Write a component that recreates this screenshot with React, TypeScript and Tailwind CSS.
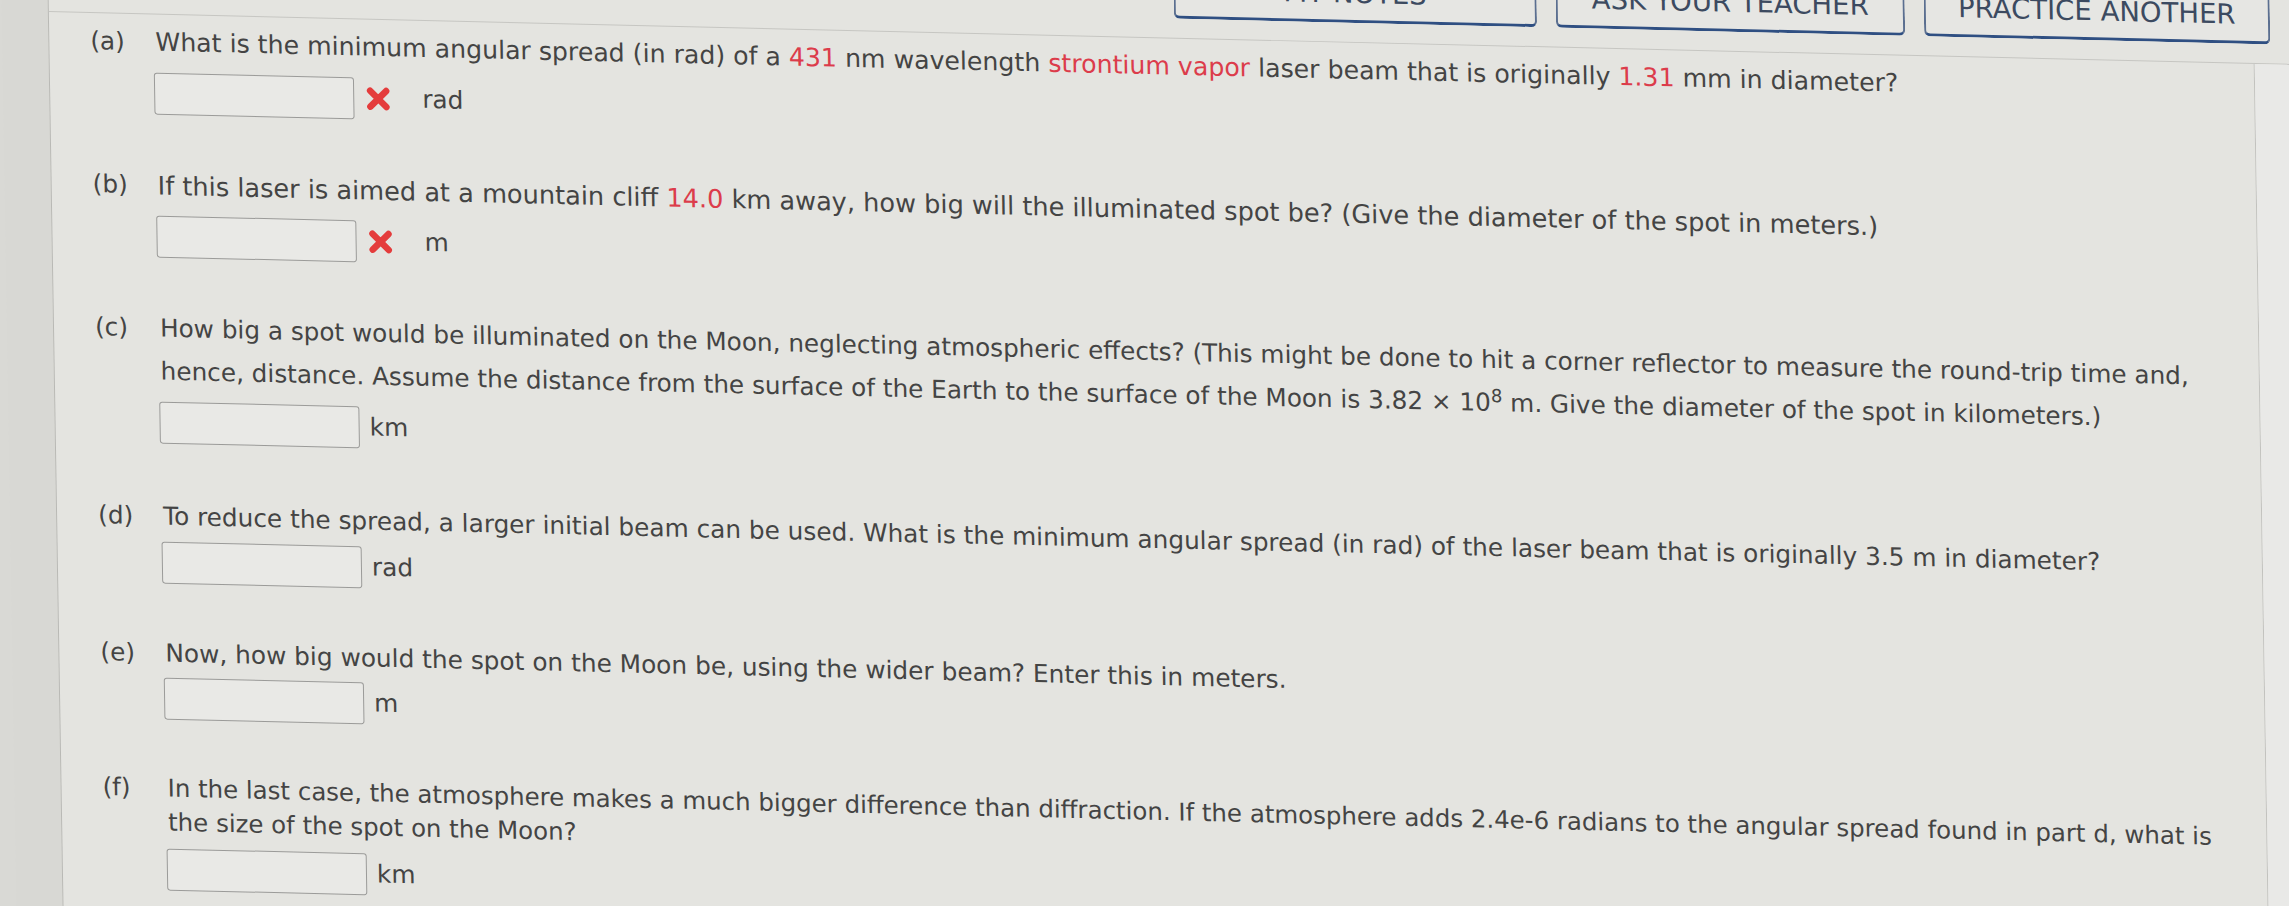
import React from "react";

const R = "text-[#dc3c4b]";

function XMark() {
  return (
    <svg width="26" height="26" viewBox="0 0 26 26" className="ml-[11px] shrink-0">
      <path d="M5 5 L21 21 M21 5 L5 21" stroke="#e43c3c" strokeWidth="6.5" strokeLinecap="round" />
    </svg>
  );
}

function Answer({ unit, wrong, mt }: { unit: string; wrong?: boolean; mt: string }) {
  return (
    <div className={"flex items-center text-[24.8px] " + mt}>
      <div className="-ml-[2px] h-[42px] w-[200px] shrink-0 rounded-[3px] border-[1.5px] border-[#9b9b99] bg-[#e9e9e6]" />
      {wrong ? <XMark /> : null}
      <span className={wrong ? "ml-[31px]" : "ml-[10px]"}>{unit}</span>
    </div>
  );
}

function Part({
  label,
  unit,
  wrong,
  top,
  size,
  ans = "mt-[13px]",
  children,
}: {
  label: string;
  unit: string;
  wrong?: boolean;
  top: string;
  size: string;
  ans?: string;
  children: React.ReactNode;
}) {
  return (
    <div className={"flex " + top}>
      <div className="w-[65px] shrink-0 whitespace-nowrap">{label}</div>
      <div className="flex-1">
        <div className={"whitespace-nowrap " + size}>{children}</div>
        <Answer unit={unit} wrong={wrong} mt={ans} />
      </div>
    </div>
  );
}

function Btn({ text, w }: { text: string; w: string }) {
  return (
    <div
      className={
        "flex h-[52px] shrink-0 items-end justify-center rounded-[6px] border-2 border-b-[3px] border-[#5b6f90] border-b-[#2f4f82] bg-[#e6e6e3] pb-[13px] text-[27.5px] leading-none text-[#3c4a60] " +
        w
      }
    >
      {text}
    </div>
  );
}

export default function App() {
  return (
    <div className="h-[906px] w-[2289px] overflow-hidden bg-[#d9d9d5] font-['DejaVu_Sans',_'Verdana',_sans-serif] text-[24.8px] leading-[34px] text-[#444444]">
      <div className="-mt-[100px] flex h-[1120px] w-[2420px] origin-top-left skew-x-[0.94deg] skew-y-[1.35deg]">
        <div className="w-[46px] shrink-0 bg-[#d8d8d4]" />
        <div className="flex flex-1 flex-col border-l border-[#b9b9b5] bg-[#e4e4e0]">
          <div className="flex h-[111px] shrink-0 items-end border-b border-[#c6c6c2] pb-[19px]">
            <div className="ml-[1125px] flex gap-[19px]">
              <Btn text="MY NOTES" w="w-[363px]" />
              <Btn text="ASK YOUR TEACHER" w="w-[349px]" />
              <Btn text="PRACTICE ANOTHER" w="w-[346px]" />
            </div>
          </div>
          <div className="flex flex-1">
            <div className="flex w-[2205px] shrink-0 flex-col border-r border-[#c2c2be] pl-[41px] pt-[11px]">
              <Part label="(a)" unit="rad" wrong top="mt-0" size="text-[25.2px]">
                What is the minimum angular spread (in rad) of a <span className={R}>431</span> nm wavelength{" "}
                <span className={R}>strontium vapor</span> laser beam that is originally{" "}
                <span className={R}>1.31</span> mm in diameter?
              </Part>
              <Part label="(b)" unit="m" wrong top="mt-[54px]" size="text-[25.6px]">
                If this laser is aimed at a mountain cliff <span className={R}>14.0</span> km away, how big will the
                illuminated spot be? (Give the diameter of the spot in meters.)
              </Part>
              <Part label="(c)" unit="km" top="mt-[54px]" size="text-[24.7px]">
                <span className="block">
                  How big a spot would be illuminated on the Moon, neglecting atmospheric effects? (This might be done
                  to hit a corner reflector to measure the round-trip time and,
                </span>
                <span className="mt-[9px] block">
                  hence, distance. Assume the distance from the surface of the Earth to the surface of the Moon is 3.82
                  {" "}× 10<sup className="text-[18px]">8</sup> m. Give the diameter of the spot in kilometers.)
                </span>
              </Part>
              <Part label="(d)" unit="rad" top="mt-[56px]" size="text-[24.75px]" ans="mt-[8px]">
                To reduce the spread, a larger initial beam can be used. What is the minimum angular spread (in rad) of
                the laser beam that is originally 3.5 m in diameter?
              </Part>
              <Part label="(e)" unit="m" top="mt-[53px]" size="text-[24.8px]" ans="mt-[7px]">
                Now, how big would the spot on the Moon be, using the wider beam? Enter this in meters.
              </Part>
              <Part label="(f)" unit="km" top="mt-[52px]" size="text-[24.45px]" ans="mt-[9px]">
                <span className="block">
                  In the last case, the atmosphere makes a much bigger difference than diffraction. If the atmosphere
                  adds 2.4e-6 radians to the angular spread found in part d, what is
                </span>
                <span className="block">the size of the spot on the Moon?</span>
              </Part>
            </div>
            <div className="flex-1 bg-[#e9e9e7]" />
          </div>
        </div>
      </div>
    </div>
  );
}
